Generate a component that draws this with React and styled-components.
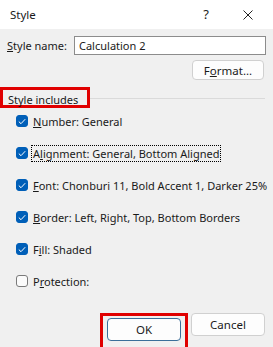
import React from "react";
import styled, { createGlobalStyle } from "styled-components";

const GlobalStyle = createGlobalStyle`
  html, body {
    margin: 0;
    padding: 0;
    background: #f0f0f0;
  }
  body {
    font-family: "Noto Sans", "Open Sans", sans-serif;
    font-size: 11px;
    color: #1a1a1a;
  }
`;

const items = [
  { key: "N", rest: "umber: General", checked: true },
  { pre: "A", key: "l", rest: "ignment: General, Bottom Aligned", checked: true, focus: true },
  { key: "F", rest: "ont: Chonburi 11, Bold Accent 1, Darker 25%", checked: true },
  { key: "B", rest: "order: Left, Right, Top, Bottom Borders", checked: true },
  { pre: "F", key: "i", rest: "ll: Shaded", checked: true },
  { pre: "P", key: "r", rest: "otection:", checked: false },
];

const App = () => {
  return (
    <>
      <GlobalStyle />
      <Dialog>
        <TitleBar>
          <Title>Style</Title>
          <TitleButtons>
            <HelpMark>?</HelpMark>
            <CloseIcon viewBox="0 0 10 10">
              <path d="M0.5 0.5 L9.5 9.5 M9.5 0.5 L0.5 9.5" stroke="#222" strokeWidth="1" />
            </CloseIcon>
          </TitleButtons>
        </TitleBar>
        <Body>
          <NameRow>
            <Label>
              <u>S</u>tyle name:
            </Label>
            <TextInput defaultValue="Calculation 2" />
          </NameRow>
          <FormatRow>
            <Button width="72px" height="20px">
              F<u>o</u>rmat...
            </Button>
          </FormatRow>
          <GroupHeader>
            <Highlight>
              <GroupTitle>Style includes</GroupTitle>
            </Highlight>
            <Rule />
          </GroupHeader>
          <List>
            {items.map((it, i) => (
              <Row key={i}>
                <Box checked={it.checked}>
                  {it.checked && (
                    <svg width="8" height="7" viewBox="0 0 8 7">
                      <path d="M0.8 3.6 L3 5.7 L7.2 1.2" fill="none" stroke="#fff" strokeWidth="1" />
                    </svg>
                  )}
                </Box>
                <ItemText focus={it.focus}>
                  {it.pre}
                  <u>{it.key}</u>
                  {it.rest}
                </ItemText>
              </Row>
            ))}
          </List>
          <Footer>
            <HighlightButton>
              <Button width="74px" height="23px" primary>
                OK
              </Button>
            </HighlightButton>
            <Button width="74px" height="23px">
              Cancel
            </Button>
          </Footer>
        </Body>
      </Dialog>
    </>
  );
};

const Dialog = styled.div`
  width: 273px;
  height: 347px;
  display: flex;
  flex-direction: column;
  overflow: hidden;
  background: #f0f0f0;
`;

const TitleBar = styled.div`
  height: 29px;
  background: #ffffff;
  display: flex;
  align-items: center;
  padding-left: 10px;
  flex-shrink: 0;
`;

const Title = styled.div`
  flex: 1;
  font-size: 11.5px;
  padding-bottom: 1px;
`;

const TitleButtons = styled.div`
  display: flex;
  align-items: center;
  gap: 34px;
  padding-right: 20px;
`;

const HelpMark = styled.span`
  font-size: 13px;
  line-height: 1;
`;

const CloseIcon = styled.svg`
  width: 10px;
  height: 10px;
`;

const Body = styled.div`
  flex: 1;
  display: flex;
  flex-direction: column;
`;

const NameRow = styled.div`
  display: flex;
  align-items: center;
  padding: 7px 7px 0 7px;
  gap: 7px;
`;

const Label = styled.span`
  white-space: nowrap;
  width: 60px;
`;

const TextInput = styled.input`
  flex: 1;
  min-width: 0;
  height: 19px;
  box-sizing: border-box;
  border: 1px solid #8c8c8c;
  background: #fff;
  font-family: inherit;
  font-size: 11px;
  color: #1a1a1a;
  padding: 0 4px;
  outline: none;
`;

const FormatRow = styled.div`
  display: flex;
  justify-content: flex-end;
  padding: 5px 9px 0 0;
`;

const Button = styled.div`
  width: ${(p) => p.width};
  height: ${(p) => p.height};
  box-sizing: border-box;
  display: flex;
  align-items: center;
  justify-content: center;
  background: #fdfdfd;
  border: 1px solid ${(p) => (p.primary ? "#3b6f9a" : "#d0d0d0")};
  border-radius: 4px;
  font-size: 11.5px;
`;

const GroupHeader = styled.div`
  display: flex;
  align-items: center;
  margin-top: 7px;
  padding-right: 8px;
`;

const Highlight = styled.div`
  width: 90px;
  height: 21px;
  box-sizing: border-box;
  border: 3px solid #e00000;
  display: flex;
  align-items: center;
  padding-left: 5px;
  flex-shrink: 0;
`;

const GroupTitle = styled.span`
  white-space: nowrap;
  margin-top: 4px;
`;

const Rule = styled.div`
  flex: 1;
  height: 1px;
  background: #dadada;
  margin-top: 2px;
`;

const List = styled.div`
  display: flex;
  flex-direction: column;
  gap: 12px;
  padding: 3px 0 0 16px;
`;

const Row = styled.div`
  display: flex;
  align-items: center;
  height: 20px;
  gap: 4px;
`;

const Box = styled.div`
  width: 12px;
  height: 12px;
  box-sizing: border-box;
  border-radius: 3px;
  display: flex;
  align-items: center;
  justify-content: center;
  background: ${(p) => (p.checked ? "#005fb8" : "#fbfbfb")};
  border: 1px solid ${(p) => (p.checked ? "#005fb8" : "#7a7a7a")};
  flex-shrink: 0;
`;

const ItemText = styled.span`
  white-space: nowrap;
  padding: 0 1px;
  outline: ${(p) => (p.focus ? "1px dotted #000" : "none")};
`;

const Footer = styled.div`
  margin-top: auto;
  display: flex;
  justify-content: flex-end;
  align-items: flex-start;
  gap: 3px;
  padding-right: 8px;
  height: 34px;
`;

const HighlightButton = styled.div`
  box-sizing: border-box;
  border: 3px solid #e00000;
  border-bottom: none;
  padding: 2px 4px 0 4px;
  height: 34px;
`;

export default App;
